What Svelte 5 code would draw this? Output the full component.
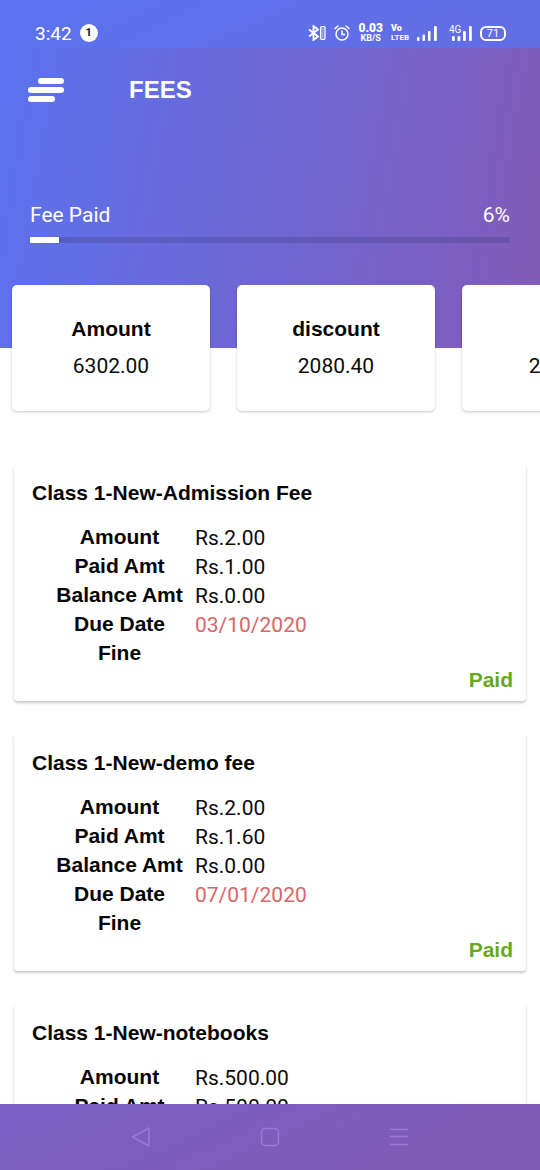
<script>
  const summary = [
    { label: 'Amount', value: '6302.00' },
    { label: 'discount', value: '2080.40' },
    { label: 'Fine', value: '221.60' }
  ];
  const paidPercent = 6;
  const fees = [
    { title: 'Class 1-New-Admission Fee', amount: 'Rs.2.00', paid: 'Rs.1.00', balance: 'Rs.0.00', due: '03/10/2020', status: 'Paid' },
    { title: 'Class 1-New-demo fee', amount: 'Rs.2.00', paid: 'Rs.1.60', balance: 'Rs.0.00', due: '07/01/2020', status: 'Paid' },
    { title: 'Class 1-New-notebooks', amount: 'Rs.500.00', paid: 'Rs.500.00', balance: '', due: '', status: '' }
  ];
</script>

<div class="screen">
  <div class="status">
    <span class="time">3:42</span>
    <span class="count">1</span>
    <div class="indicators">
      <svg width="18" height="16" viewBox="0 0 18 16" fill="none" stroke="#fff" aria-hidden="true">
        <path d="M1 4.5 10 11.5 5.5 15V1L10 4.5 1 11.5" stroke-width="1.8" />
        <rect x="12.7" y="1.7" width="4.300" height="12.600" rx="1" stroke-width="1.3" />
        <path d="M14.850 3.500v9" stroke-width="1.200" stroke-dasharray="1 1" />
      </svg>
      <svg width="16" height="16" viewBox="0 0 16 16" fill="none" stroke="#fff" stroke-width="1.5" stroke-linecap="round" aria-hidden="true">
        <circle cx="8" cy="9" r="6" />
        <path d="M8 6v3.500h2.500M1 3.500 4 1M15 3.500 12 1" />
      </svg>
      <div class="speed"><b>0.03</b><small>KB/S</small></div>
      <div class="volte"><b>Vo</b><small>LTEB</small></div>
      <svg width="20" height="16" viewBox="0 0 20 16" fill="#fff" aria-hidden="true">
        <rect x="0" y="12" width="2.500" height="4" rx="1" />
        <rect x="5.500" y="9.500" width="2.500" height="6.500" rx="1" />
        <rect x="11" y="6" width="2.500" height="10" rx="1" />
        <rect x="17" y="1" width="2.800" height="15" rx="1" />
      </svg>
      <div class="mobile">
        <span>4G</span>
        <svg width="20" height="16" viewBox="0 0 20 16" fill="#fff" aria-hidden="true">
          <rect x="0" y="11" width="2.800" height="5" rx="1" />
          <rect x="5.500" y="11" width="2.800" height="5" rx="1" />
          <rect x="11" y="6" width="2.800" height="10" rx="1" />
          <rect x="17" y="1" width="2.800" height="15" rx="1" />
        </svg>
      </div>
      <div class="battery">71</div>
    </div>
  </div>

  <main>
    <header>
      <div class="toolbar">
        <button class="menu" aria-label="Menu">
          <svg width="36" height="24" viewBox="0 0 36 24" fill="#fff" aria-hidden="true">
            <rect x="10" y="0" width="26" height="6" rx="3" />
            <rect x="0" y="9" width="36" height="6" rx="3" />
            <rect x="0" y="18" width="27" height="6" rx="3" />
          </svg>
        </button>
        <h1>FEES</h1>
      </div>
      <div class="progress">
        <div class="caption"><span>Fee Paid</span><span>{paidPercent}%</span></div>
        <div class="track" role="progressbar" aria-label="Fee Paid" aria-valuenow={paidPercent} aria-valuemin="0" aria-valuemax="100">
          <div class="fill" style="width: {paidPercent}%"></div>
        </div>
      </div>
    </header>

    <section class="summary">
      {#each summary as item}
        <article class="tile">
          <h2>{item.label}</h2>
          <p>{item.value}</p>
        </article>
      {/each}
    </section>

    <section class="fees">
      {#each fees as fee}
        <article class="fee">
          <h2>{fee.title}</h2>
          <table>
            <tbody>
              <tr><th scope="row">Amount</th><td>{fee.amount}</td></tr>
              <tr><th scope="row">Paid Amt</th><td>{fee.paid}</td></tr>
              <tr><th scope="row">Balance Amt</th><td>{fee.balance}</td></tr>
              <tr><th scope="row">Due Date</th><td class="due">{fee.due}</td></tr>
              <tr><th scope="row">Fine</th><td></td></tr>
            </tbody>
          </table>
          <p class="state">{fee.status}</p>
        </article>
      {/each}
    </section>
  </main>

  <nav>
    <button aria-label="Back">
      <svg width="20" height="20" viewBox="0 0 20 20" aria-hidden="true"><path d="M18 1v18L1.500 10z" /></svg>
    </button>
    <button aria-label="Home">
      <svg width="20" height="20" viewBox="0 0 20 20" aria-hidden="true"><rect x="1.500" y="1.500" width="17" height="17" rx="4" /></svg>
    </button>
    <button aria-label="Recent apps">
      <svg width="20" height="20" viewBox="0 0 20 20" aria-hidden="true"><path d="M1 2.500h18M1 9.500h18M1 17.500h18" /></svg>
    </button>
  </nav>
</div>

<style>
  :global(body) {
    margin: 0;
  }
  .screen {
    display: flex;
    flex-direction: column;
    height: 100vh;
    background: linear-gradient(155deg, #5b72ef 0%, #825bb7 100%);
    font: 21px/29px Roboto, sans-serif;
    color: #0c0c0c;
  }
  h1, h2, p {
    margin: 0;
  }
  h2, th {
    font: bold 21px/29px "Liberation Sans", Arial, sans-serif;
    color: #050505;
  }
  button {
    display: flex;
    padding: 0;
    border: 0;
    background: none;
  }
  .status {
    display: flex;
    align-items: center;
    flex: none;
    box-sizing: border-box;
    height: 48px;
    padding: 18px 34px 0 35px;
    color: #fff;
  }
  .time {
    font-size: 19px;
  }
  .count {
    width: 18px;
    margin-left: 8px;
    border-radius: 50%;
    background: #fff;
    color: #111;
    font: bold 11px/18px Roboto, sans-serif;
    text-align: center;
  }
  .indicators {
    display: flex;
    align-items: center;
    gap: 8px;
    margin-left: auto;
  }
  .speed, .volte {
    display: flex;
    flex-direction: column;
    align-items: center;
    font: bold 9px/9px Roboto, sans-serif;
  }
  .speed b {
    font-size: 12px;
    line-height: 11px;
  }
  .speed small {
    font-size: 9px;
  }
  .volte {
    align-items: flex-start;
  }
  .volte b {
    font-size: 9px;
  }
  .volte small {
    font-size: 8px;
  }
  .mobile {
    position: relative;
    display: flex;
    padding-left: 7px;
  }
  .mobile span {
    position: absolute;
    left: 4px;
    top: 0;
    font-size: 10px;
    line-height: 10px;
  }
  .battery {
    width: 22px;
    border: 2px solid #fff;
    border-radius: 6px;
    font: 11px/11px Roboto, sans-serif;
    text-align: center;
  }
  main {
    flex: 1;
    min-height: 0;
    overflow: hidden auto;
    scrollbar-width: none;
    background: #fff;
  }
  header {
    box-sizing: border-box;
    height: 300px;
    background: linear-gradient(100deg, #5b72ef 0%, #825bb7 100%);
    color: #fff;
  }
  .toolbar {
    display: flex;
    align-items: center;
    gap: 65px;
    height: 84px;
    padding: 0 28px;
  }
  h1 {
    padding-bottom: 2px;
    font: bold 24px/29px "Liberation Sans", Arial, sans-serif;
  }
  .progress {
    padding: 69px 30px 0;
  }
  .caption {
    display: flex;
    justify-content: space-between;
  }
  .track {
    height: 6px;
    margin-top: 7px;
    background: rgba(60, 60, 130, 0.3);
  }
  .fill {
    height: 100%;
    background: #fff;
  }
  .summary {
    position: relative;
    display: flex;
    gap: 27px;
    margin-top: -63px;
    padding: 0 12px 4px;
    overflow-x: auto;
    scrollbar-width: none;
  }
  .tile {
    flex: none;
    box-sizing: border-box;
    width: 198px;
    padding: 29px 0 30px;
    border-radius: 5px;
    background: #fff;
    box-shadow: 0 1px 3px rgba(0, 0, 0, 0.22);
    text-align: center;
  }
  .tile p {
    padding-top: 9px;
  }
  .fees {
    display: flex;
    flex-direction: column;
    gap: 32px;
    padding: 48px 14px;
  }
  .fee {
    padding: 15px 13px 9px 18px;
    border-radius: 4px;
    background: #fff;
    box-shadow: 0 2px 3px rgba(0, 0, 0, 0.22);
  }
  table {
    margin: 15px 0 0 20px;
    border-collapse: collapse;
  }
  th, td {
    height: 29px;
    padding: 0;
  }
  th {
    width: 135px;
    text-align: center;
  }
  td {
    box-sizing: border-box;
    padding: 4px 0 0 8px;
    line-height: 25px;
  }
  .due {
    color: #dc6468;
  }
  .state {
    min-height: 25px;
    color: #66a91f;
    font: bold 21px/25px "Liberation Sans", Arial, sans-serif;
    text-align: right;
  }
  nav {
    display: flex;
    justify-content: center;
    align-items: center;
    flex: none;
    gap: 109px;
    height: 66px;
  }
  nav svg {
    fill: none;
    stroke: #9c7bd8;
    stroke-width: 1.5;
    stroke-linejoin: round;
  }
</style>
